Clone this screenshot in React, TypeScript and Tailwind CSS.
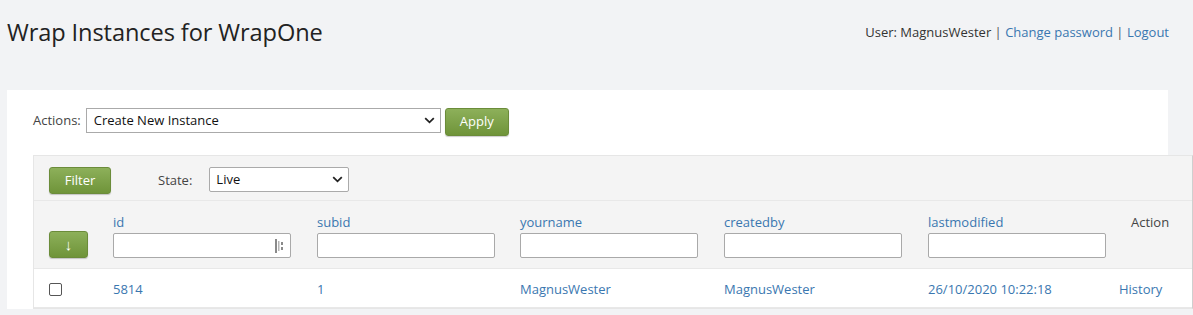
import React from "react";

const font = { fontFamily: '"Open Sans", "Noto Sans", Arial, sans-serif' };

function GreenButton({ children, className }: { children: React.ReactNode; className: string }) {
  return (
    <button
      className={`flex items-center justify-center rounded-[3px] border border-[#6b8c3a] bg-gradient-to-b from-[#8db05a] to-[#6f9439] text-white text-[13px] shadow-[0_1px_1px_rgba(0,0,0,0.2)] ${className}`}
    >
      {children}
    </button>
  );
}

function Chevron() {
  return (
    <svg width="11" height="7" viewBox="0 0 11 7" className="shrink-0">
      <path d="M1.2 1.2 L5.5 5.3 L9.8 1.2" fill="none" stroke="#222" strokeWidth="1.8" />
    </svg>
  );
}

function FilterInput({ icon }: { icon?: boolean }) {
  return (
    <div className="relative h-[25px] w-[178px] rounded-[2px] border border-[#a9a9a9] bg-white">
      {icon && (
        <svg width="10" height="14" viewBox="0 0 10 14" className="absolute right-[5px] top-[5px]">
          <rect x="0" y="0" width="2" height="14" fill="#8a8a8a" />
          <rect x="3" y="2" width="1.5" height="10" fill="#b5b5b5" />
          <rect x="6" y="3" width="2" height="3" fill="#8a8a8a" />
          <rect x="6" y="8" width="2" height="3" fill="#8a8a8a" />
        </svg>
      )}
    </div>
  );
}

const cols = "grid grid-cols-[79px_204px_203px_204px_204px_203px_1fr]";

export default function App() {
  return (
    <div style={font} className="h-[315px] w-[1193px] overflow-hidden bg-[#f2f3f5] text-[#333]">
      <div className="flex h-[90px] items-start justify-between pl-[7px] pr-[24px]">
        <h1 className="mt-[15px] text-[23.6px] leading-[34px] text-[#222] tracking-[-0.1px]">
          Wrap Instances for WrapOne
        </h1>
        <div className="mt-[23px] text-[13px] leading-[18px] text-[#333]">
          User: MagnusWester <span className="text-[#555]">|</span>{" "}
          <a className="text-[#3a77b0]">Change password</a> <span className="text-[#555]">|</span>{" "}
          <a className="text-[#3a77b0]">Logout</a>
        </div>
      </div>

      <div className="ml-[7px] w-[1161px] bg-white pl-[26px] pt-[18px]">
        <div className="flex items-start">
          <span className="mt-[4px] mr-[5px] text-[13px] leading-[17px] text-[#444]">Actions:</span>
          <div className="flex h-[25px] w-[355px] items-center justify-between border border-[#aaa] bg-white pl-[7px] pr-[5px] text-[13px] text-[#111]">
            <span>Create New Instance</span>
            <Chevron />
          </div>
          <GreenButton className="ml-[4px] h-[28px] w-[64px]">Apply</GreenButton>
        </div>

        <div className="mt-[19px] w-[1160px] border border-[#e6e6e6] border-r-[#cfcfcf] bg-[#f4f4f4]">
          <div className="flex h-[44px] items-start pl-[15px] pt-[11px]">
            <GreenButton className="h-[27px] w-[62px]">Filter</GreenButton>
            <span className="ml-[47px] mt-[4px] text-[13px] text-[#444]">State:</span>
            <div className="ml-[17px] flex h-[25px] w-[140px] items-center justify-between rounded-[2px] border border-[#aaa] bg-white pl-[6px] pr-[5px] text-[13px] text-[#111]">
              <span>Live</span>
              <Chevron />
            </div>
          </div>
          <div className={`${cols} h-[68px] border-t border-[#e8e8e8] pt-[12px]`}>
            <div className="pl-[15px] pt-[18px]">
              <GreenButton className="h-[27px] w-[39px] text-[15px]">↓</GreenButton>
            </div>
            {["id", "subid", "yourname", "createdby", "lastmodified"].map((c, i) => (
              <div key={c} className="flex flex-col">
                <span className="h-[20px] text-[13px] leading-[18px] text-[#3a77b0]">{c}</span>
                <FilterInput icon={i === 0} />
              </div>
            ))}
            <span className="text-[13px] leading-[18px] text-[#444]">Action</span>
          </div>
          <div className={`${cols} h-[40px] items-center border-t border-b border-[#e8e8e8] bg-white pt-[3px] text-[13px]`}>
            <div className="pl-[15px]">
              <div className="h-[13px] w-[13px] rounded-[2px] border border-[#555] bg-white" />
            </div>
            <span className="text-[#3a77b0]">5814</span>
            <span className="text-[#3a77b0]">1</span>
            <span className="text-[#3a77b0]">MagnusWester</span>
            <span className="text-[#3a77b0]">MagnusWester</span>
            <span className="text-[#3a77b0]">26/10/2020 10:22:18</span>
            <span className="-ml-[12px] text-[#3a77b0]">History</span>
          </div>
        </div>
      </div>
    </div>
  );
}
